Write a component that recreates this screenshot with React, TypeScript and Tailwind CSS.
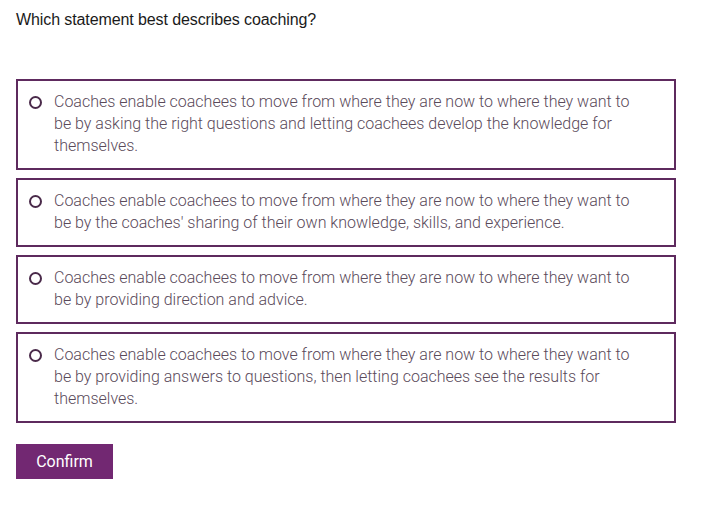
import { useState } from 'react'

const options = [
  'Coaches enable coachees to move from where they are now to where they want to be by asking the right questions and letting coachees develop the knowledge for themselves.',
  "Coaches enable coachees to move from where they are now to where they want to be by the coaches' sharing of their own knowledge, skills, and experience.",
  'Coaches enable coachees to move from where they are now to where they want to be by providing direction and advice.',
  'Coaches enable coachees to move from where they are now to where they want to be by providing answers to questions, then letting coachees see the results for themselves.',
]

export default function App() {
  const [selected, setSelected] = useState<number | null>(null)

  return (
    <div className="min-h-[518px] bg-white px-4 pt-[10px]">
      {/* Question */}
      <h2 className="text-[16px] leading-[20px] tracking-[-0.1px] text-[#1a1a1a] font-['Liberation_Sans',Arial,sans-serif]">
        Which statement best describes coaching?
      </h2>

      {/* Options */}
      <div className="mt-[49px] flex w-[660px] flex-col gap-2">
        {options.map((text, i) => (
          <button
            key={i}
            onClick={() => setSelected(i)}
            className="flex items-start border-2 border-[#5e2a5e] bg-white pt-[10px] pb-[11px] pl-[11px] pr-[36px] text-left"
          >
            <span className="mt-[5px] flex h-[13px] w-[13px] shrink-0 items-center justify-center rounded-full border-[2.5px] border-[#4a2a4a]">
              {selected === i && <span className="h-[5px] w-[5px] rounded-full bg-[#4a2a4a]" />}
            </span>
            <span className="ml-[12px] text-[16px] leading-[22px] font-light text-[#5a4a5a] font-['Roboto',sans-serif]">
              {text}
            </span>
          </button>
        ))}
      </div>

      {/* Confirm */}
      <button className="mt-[21px] h-[35px] w-[97px] bg-[#722872] text-[16px] text-white font-['Roboto',sans-serif]">
        Confirm
      </button>
    </div>
  )
}
